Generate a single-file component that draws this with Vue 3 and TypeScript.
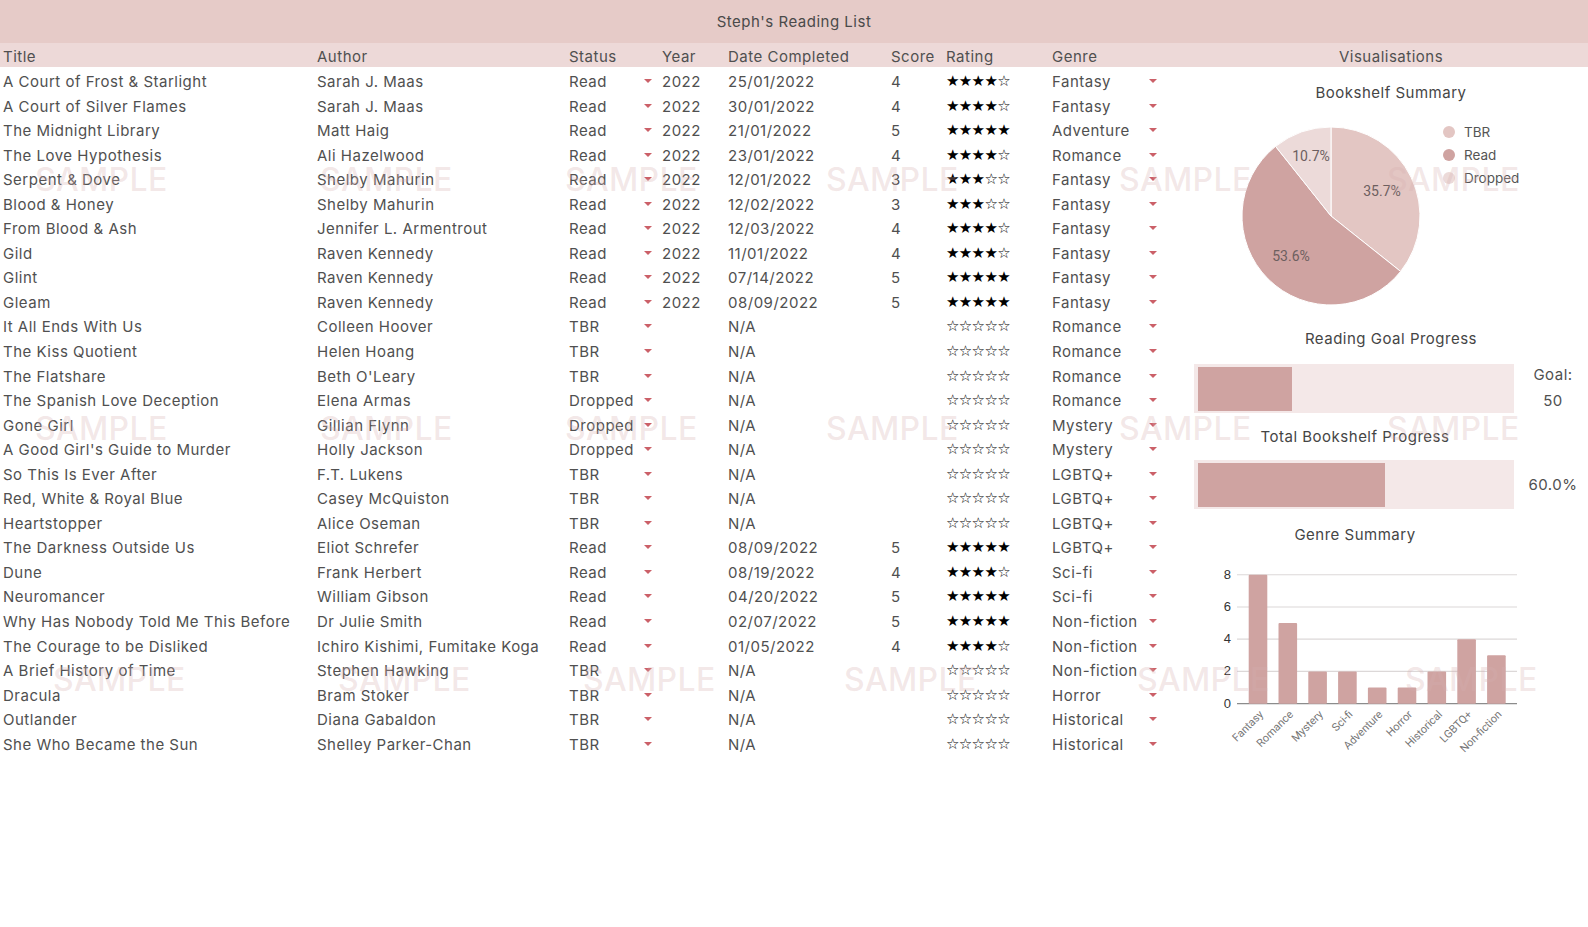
<template>
  <div class="page">
    <div class="page-title">Steph's Reading List</div>
    <div class="body">
      <section class="sheet">
        <div class="row head">
          <div v-for="h in headers" :key="h" class="cell">{{ h }}</div>
        </div>
        <div v-for="b in books" :key="b.title" class="row">
          <div class="cell">{{ b.title }}</div>
          <div class="cell">{{ b.author }}</div>
          <div class="cell drop">{{ b.status }}<i class="arrow"></i></div>
          <div class="cell">{{ b.year }}</div>
          <div class="cell">{{ b.date }}</div>
          <div class="cell">{{ b.score || '' }}</div>
          <div class="cell stars"><span v-for="n in 5" :key="n" class="star">{{ n <= b.score ? '★' : '☆' }}</span></div>
          <div class="cell drop genre">{{ b.genre }}<i class="arrow"></i></div>
        </div>
      </section>

      <aside class="viz">
        <div class="viz-head">Visualisations</div>
        <div class="viz-title first">Bookshelf Summary</div>
        <svg class="pie" width="394" height="226" viewBox="0 0 394 226">
          <path v-for="s in slices" :key="s.label" :d="s.d" :fill="s.color" stroke="#fff" stroke-width="1" />
          <text x="188" y="93" class="pct" text-anchor="middle">35.7%</text>
          <text x="97" y="158" class="pct" text-anchor="middle">53.6%</text>
          <text x="117" y="58" class="pct" text-anchor="middle">10.7%</text>
          <g v-for="(s, i) in slices" :key="s.label">
            <circle cx="255" :cy="29 + i * 23" r="6" :fill="s.color" />
            <text x="270" :y="34 + i * 23" class="legend">{{ s.label }}</text>
          </g>
        </svg>

        <div class="viz-title">Reading Goal Progress</div>
        <div class="progress">
          <div class="track"><div class="fill" style="width: 30%"></div></div>
          <div class="side">Goal:<br />50</div>
        </div>

        <div class="viz-title half">Total Bookshelf Progress</div>
        <div class="progress">
          <div class="track"><div class="fill" style="width: 60%"></div></div>
          <div class="side">60.0%</div>
        </div>

        <div class="viz-title half">Genre Summary</div>
        <svg class="bars" width="394" height="220" viewBox="0 0 394 220">
          <g v-for="t in [0, 2, 4, 6, 8]" :key="t">
            <line x1="43" x2="323" :y1="yOf(t)" :y2="yOf(t)" :stroke="t === 0 ? '#8c8c8c' : '#dcd8d8'" stroke-width="1.2" />
            <text x="37" :y="yOf(t) + 4" class="tick" text-anchor="end">{{ t }}</text>
          </g>
          <g v-for="(g, i) in genres" :key="g.name">
            <rect :x="xOf(i) - 9.3" :y="yOf(g.count)" width="18.6" :height="yOf(0) - yOf(g.count)" rx="1" fill="#cfa3a1" />
            <text :transform="`translate(${xOf(i) + 6} 170) rotate(-45)`" class="xlabel" text-anchor="end">{{ g.name }}</text>
          </g>
        </svg>
      </aside>
    </div>

    <div class="watermarks">
      <span v-for="m in marks" :key="m.x + '-' + m.y" class="mark" :style="{ left: m.x + 'px', top: m.y + 'px' }">SAMPLE</span>
    </div>
  </div>
</template>

<script setup lang="ts">
interface Book {
  title: string
  author: string
  status: string
  year: string
  date: string
  score: number
  genre: string
}

const headers = ['Title', 'Author', 'Status', 'Year', 'Date Completed', 'Score', 'Rating', 'Genre']

// the last few read books have no year filled in
const noYear = ['The Darkness Outside Us', 'Dune', 'Neuromancer', 'Why Has Nobody Told Me This Before', 'The Courage to be Disliked']

const read = (title: string, author: string, date: string, score: number, genre: string): Book => ({
  title, author, status: 'Read', year: noYear.includes(title) ? '' : '2022', date, score, genre
})
const other = (title: string, author: string, status: string, genre: string): Book => ({
  title, author, status, year: '', date: 'N/A', score: 0, genre
})

const books: Book[] = [
  read('A Court of Frost & Starlight', 'Sarah J. Maas', '25/01/2022', 4, 'Fantasy'),
  read('A Court of Silver Flames', 'Sarah J. Maas', '30/01/2022', 4, 'Fantasy'),
  read('The Midnight Library', 'Matt Haig', '21/01/2022', 5, 'Adventure'),
  read('The Love Hypothesis', 'Ali Hazelwood', '23/01/2022', 4, 'Romance'),
  read('Serpent & Dove', 'Shelby Mahurin', '12/01/2022', 3, 'Fantasy'),
  read('Blood & Honey', 'Shelby Mahurin', '12/02/2022', 3, 'Fantasy'),
  read('From Blood & Ash', 'Jennifer L. Armentrout', '12/03/2022', 4, 'Fantasy'),
  read('Gild', 'Raven Kennedy', '11/01/2022', 4, 'Fantasy'),
  read('Glint', 'Raven Kennedy', '07/14/2022', 5, 'Fantasy'),
  read('Gleam', 'Raven Kennedy', '08/09/2022', 5, 'Fantasy'),
  other('It All Ends With Us', 'Colleen Hoover', 'TBR', 'Romance'),
  other('The Kiss Quotient', 'Helen Hoang', 'TBR', 'Romance'),
  other('The Flatshare', "Beth O'Leary", 'TBR', 'Romance'),
  other('The Spanish Love Deception', 'Elena Armas', 'Dropped', 'Romance'),
  other('Gone Girl', 'Gillian Flynn', 'Dropped', 'Mystery'),
  other("A Good Girl's Guide to Murder", 'Holly Jackson', 'Dropped', 'Mystery'),
  other('So This Is Ever After', 'F.T. Lukens', 'TBR', 'LGBTQ+'),
  other('Red, White & Royal Blue', 'Casey McQuiston', 'TBR', 'LGBTQ+'),
  other('Heartstopper', 'Alice Oseman', 'TBR', 'LGBTQ+'),
  read('The Darkness Outside Us', 'Eliot Schrefer', '08/09/2022', 5, 'LGBTQ+'),
  read('Dune', 'Frank Herbert', '08/19/2022', 4, 'Sci-fi'),
  read('Neuromancer', 'William Gibson', '04/20/2022', 5, 'Sci-fi'),
  read('Why Has Nobody Told Me This Before', 'Dr Julie Smith', '02/07/2022', 5, 'Non-fiction'),
  read('The Courage to be Disliked', 'Ichiro Kishimi, Fumitake Koga', '01/05/2022', 4, 'Non-fiction'),
  other('A Brief History of Time', 'Stephen Hawking', 'TBR', 'Non-fiction'),
  other('Dracula', 'Bram Stoker', 'TBR', 'Horror'),
  other('Outlander', 'Diana Gabaldon', 'TBR', 'Historical'),
  other('She Who Became the Sun', 'Shelley Parker-Chan', 'TBR', 'Historical')
]

// pie: starts at 12 o'clock, clockwise
const CX = 137
const CY = 113
const R = 89
function slicePath(from: number, to: number) {
  const a = (from / 100) * Math.PI * 2
  const b = (to / 100) * Math.PI * 2
  const large = to - from > 50 ? 1 : 0
  return `M${CX} ${CY}L${CX + R * Math.sin(a)} ${CY - R * Math.cos(a)}A${R} ${R} 0 ${large} 1 ${CX + R * Math.sin(b)} ${CY - R * Math.cos(b)}Z`
}
const slices = [
  { label: 'TBR', color: '#e3c6c3', d: slicePath(0, 35.7) },
  { label: 'Read', color: '#cfa3a1', d: slicePath(35.7, 89.3) },
  { label: 'Dropped', color: '#ecdad9', d: slicePath(89.3, 100) }
]

const genres = [
  { name: 'Fantasy', count: 8 },
  { name: 'Romance', count: 5 },
  { name: 'Mystery', count: 2 },
  { name: 'Sci-fi', count: 2 },
  { name: 'Adventure', count: 1 },
  { name: 'Horror', count: 1 },
  { name: 'Historical', count: 2 },
  { name: 'LGBTQ+', count: 4 },
  { name: 'Non-fiction', count: 3 }
]
const yOf = (v: number) => 158.7 - v * 16.12
const xOf = (i: number) => 64 + i * 29.8

const markCols = [35, 320, 565, 826, 1119, 1387]
const marks = [
  ...markCols.map((x) => ({ x, y: 160 })),
  ...markCols.map((x) => ({ x, y: 409 })),
  ...markCols.map((x) => ({ x: x + 18, y: 660 }))
]
</script>

<style>
html,
body {
  margin: 0;
  background: #fff;
}
</style>

<style scoped>
.page {
  position: relative;
  width: 1588px;
  height: 927px;
  overflow: hidden;
  font-family: Inter, "Noto Sans", sans-serif;
  font-size: 15px;
  letter-spacing: 0.5px;
  color: #505050;
}
.page-title {
  height: 43px;
  line-height: 43px;
  text-align: center;
  background: #e6cbc8;
  color: #4a4a4a;
}
.body {
  display: flex;
}
.sheet {
  width: 1194px;
  flex: none;
}
.row {
  display: grid;
  grid-template-columns: 314px 252px 93px 66px 163px 55px 106px 116px;
  height: 24.56px;
  line-height: 29px;
}
.head {
  height: 24px;
  line-height: 27px;
  background: #edd9d8;
}
.cell {
  position: relative;
  padding-left: 3px;
  white-space: nowrap;
}
.arrow {
  position: absolute;
  top: 12px;
  right: 7px;
  width: 0;
  height: 0;
  border: 4.5px solid transparent;
  border-top: 4.5px solid #cb6068;
  border-bottom: 0;
}
.genre .arrow {
  right: 8px;
}
.stars {
  color: #000;
  font-family: "DejaVu Sans", sans-serif;
  letter-spacing: 0;
  font-size: 15px;
}
.star {
  display: inline-block;
  width: 12.8px;
  text-align: center;
}
.viz {
  width: 394px;
  flex: none;
}
.viz-head {
  height: 24px;
  line-height: 27px;
  text-align: center;
  background: #edd9d8;
}
.viz-title {
  height: 20px;
  line-height: 20px;
  text-align: center;
  color: #454545;
}
.viz-title.first {
  margin-top: 16px;
}
.viz-title.half {
  width: 322px;
  margin-top: 16px;
}
.pie,
.bars {
  display: block;
}
.pct {
  font-family: Roboto, sans-serif;
  font-size: 14px;
  letter-spacing: 0;
  fill: #6d5f5f;
}
.legend {
  font-size: 13.5px;
  letter-spacing: 0;
  fill: #555;
}
.progress {
  display: grid;
  grid-template-columns: 320px 1fr;
  align-items: center;
  margin-top: 13px;
  height: 49px;
}
.track {
  height: 49px;
  padding: 3px 4px;
  box-sizing: border-box;
  background: #f4e8e8;
}
.fill {
  height: 44px;
  background: #cfa3a1;
}
.side {
  text-align: center;
  line-height: 26px;
  padding-left: 4px;
}
.tick {
  font-family: "Liberation Sans", sans-serif;
  font-size: 13px;
  letter-spacing: 0;
  fill: #333;
}
.xlabel {
  font-family: Roboto, sans-serif;
  font-size: 11px;
  letter-spacing: 0;
  fill: #757575;
}
.watermarks {
  position: absolute;
  inset: 0;
  pointer-events: none;
}
.mark {
  position: absolute;
  font-family: Inter, sans-serif;
  font-size: 32px;
  line-height: 40px;
  font-weight: 500;
  letter-spacing: 0.4px;
  color: rgba(214, 176, 176, 0.3);
}
</style>
